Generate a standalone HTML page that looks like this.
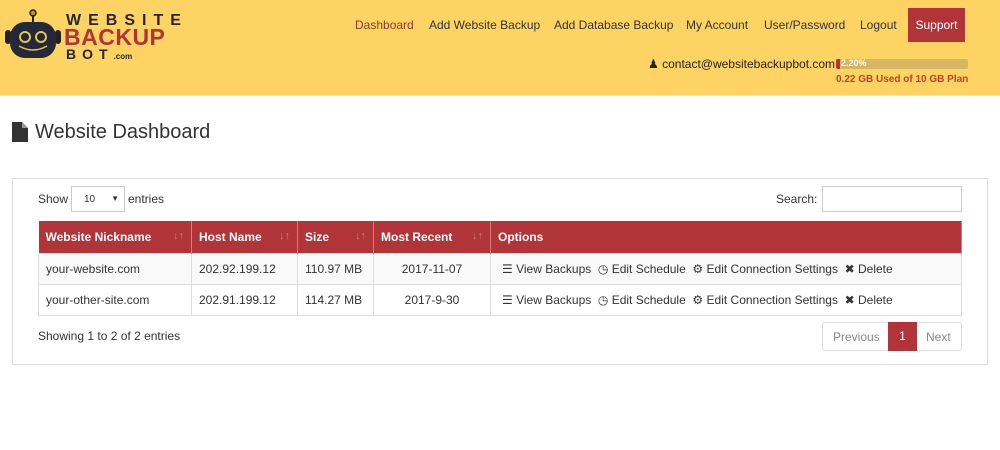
<!DOCTYPE html>
<html><head><style>
*{margin:0;padding:0;box-sizing:border-box}
body{width:1000px;height:450px;background:#fff;font-family:"Liberation Sans",Arial,sans-serif;font-size:12px;color:#333;position:relative;overflow:hidden}
.hdr{position:absolute;left:0;top:0;width:1000px;height:96px;background:#fdd463;border-bottom:1px solid #f2e2b0}
.nav{position:absolute;top:18px;font-size:12px;color:#333}
.sup{position:absolute;left:908px;top:8px;width:57px;height:34px;background:#b03438;color:#fff;font-size:12px;text-align:center;line-height:34px}
.abs{position:absolute;white-space:nowrap}
table{border-collapse:collapse;position:absolute;left:38px;top:221px;width:924px}
th{background:#b03438;color:#fff;font-weight:bold;text-align:left;height:32px;padding:0 7px;border-right:1px solid #d87a7c;font-size:12px;position:relative}
th .s{position:absolute;right:7px;top:9px;color:#d27a7c;font-size:11px}
td{height:31px;padding:0 7px;border:1px solid #ddd;font-size:12px}
tr.a td{background:#f9f9f9}
</style></head><body>
<div class="hdr">
<svg class="abs" style="left:5px;top:8px" width="56" height="52" viewBox="0 0 56 52">
<circle cx="28" cy="5" r="3" fill="#c89020" stroke="#222" stroke-width="1.5"/>
<rect x="27" y="7" width="2" height="8" fill="#222"/>
<rect x="0" y="22" width="6" height="14" rx="3" fill="#222"/>
<rect x="50" y="22" width="6" height="14" rx="3" fill="#222"/>
<rect x="5" y="14" width="46" height="36" rx="15" fill="#24293a"/>
<circle cx="20" cy="29" r="5" fill="none" stroke="#e6c050" stroke-width="2"/>
<circle cx="36" cy="29" r="5" fill="none" stroke="#e6c050" stroke-width="2"/>
<path d="M14 38 Q28 46 42 38" fill="none" stroke="#e6c050" stroke-width="1.5"/>
</svg>
<div class="abs" style="left:66px;top:12px;font-size:16px;font-weight:bold;letter-spacing:7px;color:#2a2430">WEBSITE</div>
<div class="abs" style="left:64px;top:26px;font-size:23px;font-weight:900;color:#b03438;letter-spacing:0.5px;line-height:22px">BACKUP</div>
<div class="abs" style="left:66px;top:46px;font-size:14px;font-weight:bold;letter-spacing:6px;color:#2a2430">BOT<span style="font-size:8px;letter-spacing:0">.com</span></div>
<div class="nav" style="left:355px;color:#8a3a30">Dashboard</div>
<div class="nav" style="left:429px">Add Website Backup</div>
<div class="nav" style="left:554px">Add Database Backup</div>
<div class="nav" style="left:686px">My Account</div>
<div class="nav" style="left:764px">User/Password</div>
<div class="nav" style="left:860px">Logout</div>
<div class="sup">Support</div>
<div class="abs" style="left:648px;top:57px;font-size:12px;color:#222">&#9823; contact@websitebackupbot.com</div>
<div class="abs" style="left:836px;top:59px;width:132px;height:10px;background:#d6b563;border-radius:2px"><div style="width:4px;height:10px;background:#b03438;border-radius:2px 0 0 2px"></div><span style="position:absolute;left:5px;top:-1px;font-size:9px;color:#fff;font-weight:bold">2.20%</span></div>
<div class="abs" style="left:836px;top:74px;font-size:10px;font-weight:bold;color:#b5452a">0.22 GB Used of 10 GB Plan</div>
</div>
<svg class="abs" style="left:12px;top:122px" width="16" height="20" viewBox="0 0 16 20"><path d="M0 0H10L16 6V20H0Z" fill="#333"/><path d="M10 0V6H16" fill="#999"/></svg>
<div class="abs" style="left:35px;top:121px;font-size:20px;color:#333">Website Dashboard</div>
<div class="abs" style="left:12px;top:178px;width:976px;height:187px;border:1px solid #ddd"></div>
<div class="abs" style="left:38px;top:192px">Show</div>
<div class="abs" style="left:71px;top:186px;width:54px;height:26px;border:1px solid #ccc;font-size:10px;padding:7px 0 0 12px">10<span style="position:absolute;right:5px;top:7px;font-size:8px">&#9660;</span></div>
<div class="abs" style="left:128px;top:192px">entries</div>
<div class="abs" style="left:776px;top:192px">Search:</div>
<div class="abs" style="left:822px;top:186px;width:140px;height:26px;border:1px solid #ccc"></div>
<table>
<tr><th style="width:153px">Website Nickname<span class="s">&#8595;&#8593;</span></th><th style="width:106px">Host Name<span class="s">&#8595;&#8593;</span></th><th style="width:76px">Size<span class="s">&#8595;&#8593;</span></th><th style="width:117px">Most Recent<span class="s">&#8595;&#8593;</span></th><th>Options</th></tr>
<tr class="a"><td>your-website.com</td><td>202.92.199.12</td><td>110.97 MB</td><td style="text-align:center">2017-11-07</td><td style="padding-left:11px">&#9776; View Backups &nbsp;&#9719; Edit Schedule &nbsp;&#9881; Edit Connection Settings &nbsp;&#10006; Delete</td></tr>
<tr><td>your-other-site.com</td><td>202.91.199.12</td><td>114.27 MB</td><td style="text-align:center">2017-9-30</td><td style="padding-left:11px">&#9776; View Backups &nbsp;&#9719; Edit Schedule &nbsp;&#9881; Edit Connection Settings &nbsp;&#10006; Delete</td></tr>
</table>
<div class="abs" style="left:38px;top:329px">Showing 1 to 2 of 2 entries</div>
<div class="abs" style="left:822px;top:322px;width:140px;height:29px;border:1px solid #ddd;border-radius:3px"></div>
<div class="abs" style="left:833px;top:330px;color:#888">Previous</div>
<div class="abs" style="left:888px;top:322px;width:29px;height:29px;background:#b03438;color:#fff;text-align:center;line-height:29px">1</div>
<div class="abs" style="left:926px;top:330px;color:#888">Next</div>
</body></html>
